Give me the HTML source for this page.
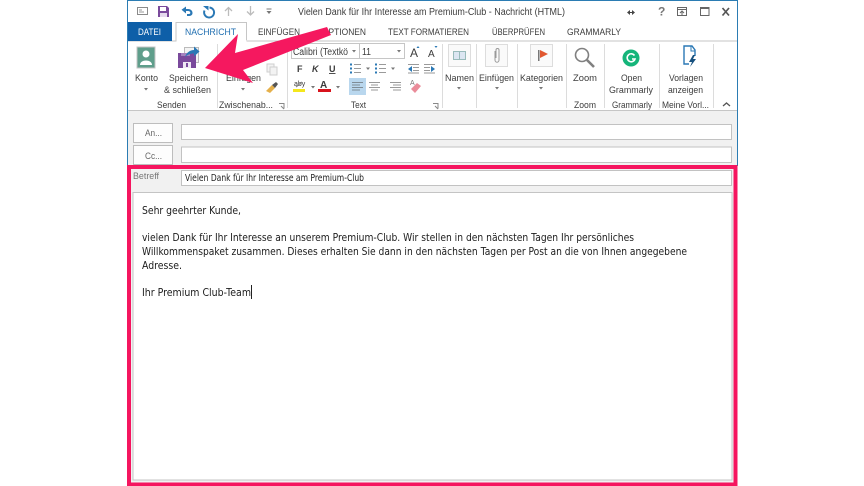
<!DOCTYPE html>
<html><head><meta charset="utf-8"><style>
html,body{margin:0;padding:0;background:#fff;width:864px;height:486px;overflow:hidden}
svg{display:block;filter:blur(.3px)}
text{font-family:"Liberation Sans",sans-serif;font-size:9.5px;fill:#3c3c3c}
text.b{font-family:"DejaVu Sans",sans-serif;font-size:10.5px;fill:#1c1c1c}
</style></head><body>
<svg width="864" height="486" viewBox="0 0 864 486" xmlns="http://www.w3.org/2000/svg">
<rect width="864" height="486" fill="#fff"/>
<!-- window -->
<rect x="127" y="0" width="611" height="486" fill="#fff"/>
<rect x="127" y="0" width="611" height="1" fill="#2b7cb3"/>
<rect x="127" y="0" width="1" height="166" fill="#2b7cb3"/>
<rect x="737" y="0" width="1" height="166" fill="#2b7cb3"/>
<rect x="128" y="111" width="609" height="55" fill="#f1f1f1"/>
<rect x="128" y="40.500" width="609" height="1" fill="#c6c6c6"/>
<rect x="128" y="110" width="609" height="1" fill="#c6c6c6"/>
<!-- QAT -->
<rect x="137.500" y="7.500" width="10" height="7" fill="#fff" stroke="#8a8a8a"/><path d="M139 10h3M139 12h5" stroke="#999" stroke-width="1"/>
<path d="M158 6h9l2 2v9h-11z" fill="#7a4a9c"/><rect x="160" y="7" width="6" height="4" fill="#fff"/><rect x="160" y="13" width="7" height="4" fill="#e5daee"/>
<path d="M186 6.500v2.500h2c3 0 4.500 2 4.500 4s-1.500 3-4 3h-1.500v-2h1.500c1 0 1.800-.3 1.800-1.300 0-1-.9-1.700-2.300-1.700h-2v2.500l-4.500-3.800z" fill="#2a78b5"/>
<path d="M209.500 7.500a5 5 0 1 1-5 3" fill="none" stroke="#2a78b5" stroke-width="1.900"/><path d="M203 6h5.500v4.500z" fill="#2a78b5"/>
<path d="M228.500 16V8M225 11l3.500-3.500 3.500 3.500" fill="none" stroke="#bcbcbc" stroke-width="1.300"/>
<path d="M250.500 6v9M247 11.500l3.500 3.500 3.500-3.500" fill="none" stroke="#bcbcbc" stroke-width="1.300"/>
<path d="M266.500 9h5" stroke="#777"/><path d="M266.500 11h5l-2.500 3z" fill="#777"/>
<text x="298" y="15" textLength="267" lengthAdjust="spacingAndGlyphs" style="font-size:10px">Vielen Dank für Ihr Interesse am Premium-Club - Nachricht (HTML)</text>
<!-- window controls -->
<path d="M628 12.500h6" stroke="#444" stroke-width="1"/><path d="M630 10v5l-3-2.500zM632 10v5l3-2.500z" fill="#444"/>
<text x="658" y="15.500" style="font-size:12px;font-weight:bold;fill:#777">?</text>
<rect x="677.500" y="7.500" width="9" height="8" fill="none" stroke="#666"/><path d="M678 9.500h8M682 15v-3.500M680 13l2-2 2 2" fill="none" stroke="#666"/>
<rect x="700.500" y="7.500" width="8.500" height="8" fill="none" stroke="#666"/><rect x="700" y="7" width="9.500" height="2" fill="#666"/>
<path d="M722.500 8l6.500 7.500M729 8l-6.500 7.500" stroke="#555" stroke-width="1.700"/>
<!-- tabs -->
<rect x="128" y="22" width="44" height="19" fill="#0e5fa8"/>
<path d="M176 41V22.500h70.500V41" fill="#fff" stroke="#c6c6c6"/><rect x="176.500" y="40" width="70" height="2" fill="#fff"/>
<text x="138" y="35" textLength="23" lengthAdjust="spacingAndGlyphs" style="fill:#fff">DATEI</text>
<text x="185" y="35" textLength="51" lengthAdjust="spacingAndGlyphs" style="fill:#1f6eb0">NACHRICHT</text>
<text x="258" y="35" textLength="42" lengthAdjust="spacingAndGlyphs">EINFÜGEN</text>
<text x="322" y="35" textLength="44" lengthAdjust="spacingAndGlyphs">OPTIONEN</text>
<text x="388" y="35" textLength="81" lengthAdjust="spacingAndGlyphs">TEXT FORMATIEREN</text>
<text x="492" y="35" textLength="53" lengthAdjust="spacingAndGlyphs">ÜBERPRÜFEN</text>
<text x="567" y="35" textLength="54" lengthAdjust="spacingAndGlyphs">GRAMMARLY</text>
<!-- separators -->
<g fill="#dcdcdc"><rect x="217" y="44" width="1" height="64"/><rect x="287" y="44" width="1" height="64"/><rect x="442" y="44" width="1" height="64"/><rect x="476" y="44" width="1" height="64"/><rect x="517" y="44" width="1" height="64"/><rect x="566" y="44" width="1" height="64"/><rect x="604" y="44" width="1" height="64"/><rect x="659" y="44" width="1" height="64"/><rect x="713" y="44" width="1" height="64"/></g>
<!-- Konto icon -->
<rect x="137" y="47" width="18" height="21" fill="#5f9e8b" stroke="#c4c4c4"/>
<circle cx="146" cy="54" r="3.500" fill="#fff"/><path d="M140 65c0-6 12-6 12 0z" fill="#fff"/>
<text x="135" y="81" textLength="23" lengthAdjust="spacingAndGlyphs">Konto</text>
<path d="M144 88h4l-2 2.500z" fill="#777"/>
<!-- Speichern icon -->
<rect x="184.500" y="47.500" width="14" height="15" fill="#f4f4f4" stroke="#bbb"/>
<path d="M178 53h16l2 2v13h-18z" fill="#7a4a9c"/><rect x="181" y="53" width="9" height="3" fill="#a583be"/><rect x="183" y="62" width="8" height="6" fill="#efe8f4"/><rect x="186" y="63" width="2" height="4" fill="#7a4a9c"/>
<path d="M185 57c1-4 5-7 9-7v-3.500l5.500 5-5.500 5v-3c-3.500 0-6.500 1-9 3.500z" fill="#2a78b5"/>
<text x="169" y="81" textLength="39" lengthAdjust="spacingAndGlyphs">Speichern</text>
<text x="164" y="93" textLength="47" lengthAdjust="spacingAndGlyphs">&amp; schließen</text>
<!-- Einfügen -->
<text x="226" y="81" textLength="35" lengthAdjust="spacingAndGlyphs">Einfügen</text>
<path d="M241 88h4l-2 2.500z" fill="#777"/>
<!-- clipboard small -->
<rect x="267" y="64" width="7" height="8" fill="#f3f3f3" stroke="#cfcfcf"/><rect x="270" y="67" width="7" height="8" fill="#f3f3f3" stroke="#cfcfcf"/>
<path d="M266 91l6-6 3 3-5 5z" fill="#e5b04a"/><path d="M272 85l4-3 2 2-3 4z" fill="#555"/>
<text x="219" y="108" textLength="54" lengthAdjust="spacingAndGlyphs">Zwischenab...</text>
<text x="157" y="108" textLength="29" lengthAdjust="spacingAndGlyphs">Senden</text>
<path d="M279 103.500h5v5M281 106l3 3" fill="none" stroke="#888"/>
<!-- font -->
<rect x="291.500" y="43.500" width="68" height="15" fill="#fff" stroke="#c6c6c6"/>
<rect x="359.500" y="43.500" width="45" height="15" fill="#fff" stroke="#c6c6c6"/>
<text x="293" y="55" textLength="55" lengthAdjust="spacingAndGlyphs" style="font-size:10px">Calibri (Textkö</text>
<path d="M352 50h4l-2 2.500zM397 50h4l-2 2.500z" fill="#777"/>
<text x="362" y="55" textLength="9" lengthAdjust="spacingAndGlyphs" style="font-size:10px">11</text>
<text x="410" y="57" style="font-size:12px">A</text><text x="428" y="57" style="font-size:10px">A</text>
<path d="M418 46l1.500 2h-3zM436 48l1.500-2h-3z" fill="#2a78b5"/>
<text x="297" y="72" style="font-weight:bold;font-size:9px">F</text><text x="312" y="72" style="font-weight:bold;font-style:italic;font-size:9px">K</text><text x="329" y="72" style="font-weight:bold;font-size:9px;text-decoration:underline">U</text>
<g stroke="#9a9a9a" fill="none"><path d="M354 64.500h7M354 68.500h7M354 72.500h7M379 64.500h7M379 68.500h7M379 72.500h7"/></g>
<path d="M350 63.500h2v2h-2zM350 67.500h2v2h-2zM350 71.500h2v2h-2zM375 63.500h2v2h-2zM375 67.500h2v2h-2zM375 71.500h2v2h-2z" fill="#2a78b5"/>
<!-- indent -->
<g stroke="#9a9a9a" fill="none"><path d="M408 64.500h11M413 67.500h6M413 70.500h6M408 73h11M424 64.500h11M424 67.500h6M424 70.500h6M424 73h11"/></g>
<path d="M408 69l4-3v6zM435 69l-4-3v6z" fill="#2a78b5"/>
<path d="M366 67.500h4l-2 2.500zM391 67.500h4l-2 2.500zM311 86h4l-2 2.500zM336 86h4l-2 2.500z" fill="#777"/>
<text x="294" y="86" style="font-size:7px">aby</text><rect x="293" y="89" width="12" height="3" fill="#f4e71d"/><path d="M296 87l6-5" stroke="#888" stroke-width="1.200"/>
<text x="320" y="88" style="font-size:10px;font-weight:bold">A</text><rect x="318" y="89" width="13" height="3" fill="#d8131c"/>
<rect x="349" y="78" width="17" height="17" fill="#b9d7ee"/>
<g stroke="#7f8c96" fill="none"><path d="M352 82.500h11M352 85h8M352 87.500h11M352 90h8"/></g>
<g stroke="#9a9a9a" fill="none"><path d="M369 82.500h11M371 85h7M369 87.500h11M371 90h7M390 82.500h11M393 85h8M390 87.500h11M393 90h8"/></g>
<path d="M411 89l6-6 4 3-6 7z" fill="#ea8c9a"/><text x="410" y="85" style="font-size:7px;fill:#777">A</text>
<text x="351" y="108" textLength="15" lengthAdjust="spacingAndGlyphs">Text</text>
<path d="M433 103.500h5v5M435 106l3 3" fill="none" stroke="#888"/>
<!-- Namen / Einfügen / Kategorien -->
<rect x="448.500" y="44.500" width="22" height="22" fill="#fafafa" stroke="#ddd"/>
<rect x="453.500" y="51.500" width="6" height="8" fill="#dce6f2" stroke="#9bb"/><rect x="459.500" y="51.500" width="6" height="8" fill="#dce6f2" stroke="#9bb"/>
<text x="445" y="81" textLength="29" lengthAdjust="spacingAndGlyphs">Namen</text><path d="M457 87h4l-2 2.500z" fill="#777"/>
<rect x="485.500" y="44.500" width="22" height="22" fill="#fafafa" stroke="#ddd"/>
<path d="M495 51v9c0 3 4 3 4 0v-10c0-2-3-2-3 0v8" fill="none" stroke="#999"/>
<text x="479" y="81" textLength="35" lengthAdjust="spacingAndGlyphs">Einfügen</text><path d="M495 87h4l-2 2.500z" fill="#777"/>
<rect x="530.500" y="44.500" width="22" height="22" fill="#fafafa" stroke="#ddd"/>
<rect x="538" y="50" width="1.500" height="11" fill="#777"/><path d="M540 50l8 4-8 4z" fill="#e1572f"/>
<text x="520" y="81" textLength="43" lengthAdjust="spacingAndGlyphs">Kategorien</text><path d="M539 87h4l-2 2.500z" fill="#777"/>
<!-- Zoom -->
<circle cx="582" cy="55" r="6.500" fill="#fff" stroke="#808080" stroke-width="1.600"/><path d="M587 60l7 7" stroke="#808080" stroke-width="2.600"/>
<text x="573" y="81" textLength="24" lengthAdjust="spacingAndGlyphs">Zoom</text>
<text x="574" y="108" textLength="22" lengthAdjust="spacingAndGlyphs">Zoom</text>
<!-- Grammarly -->
<circle cx="631" cy="58" r="8.500" fill="#15b57a"/><path d="M634.500 55.500a4 4 0 1 0 .5 3.500h-3" fill="none" stroke="#fff" stroke-width="1.600"/>
<text x="621" y="81" textLength="21" lengthAdjust="spacingAndGlyphs">Open</text>
<text x="609" y="93" textLength="44" lengthAdjust="spacingAndGlyphs">Grammarly</text>
<text x="612" y="108" textLength="40" lengthAdjust="spacingAndGlyphs">Grammarly</text>
<!-- Vorlagen -->
<path d="M684 62V46h8l3 4v6M684 62v2h5" fill="#fff" stroke="#2a78b5" stroke-width="1.400"/><path d="M691 46v5h4" fill="none" stroke="#2a78b5"/>
<path d="M693 55l-4 7h3l-2 5 6-8h-3l2-4z" fill="#16507e"/>
<text x="669" y="81" textLength="34" lengthAdjust="spacingAndGlyphs">Vorlagen</text>
<text x="668" y="93" textLength="35" lengthAdjust="spacingAndGlyphs">anzeigen</text>
<text x="662" y="108" textLength="47" lengthAdjust="spacingAndGlyphs">Meine Vorl...</text>
<path d="M723 106l3.500-3 3.500 3" fill="none" stroke="#555" stroke-width="1.300"/>
<!-- address -->
<rect x="133.500" y="123.500" width="39" height="19" fill="#fdfdfd" stroke="#bdbdbd"/>
<rect x="133.500" y="145.500" width="39" height="19" fill="#fdfdfd" stroke="#bdbdbd"/>
<text x="145" y="136" textLength="17" lengthAdjust="spacingAndGlyphs" style="fill:#666">An...</text>
<text x="145" y="159" textLength="17" lengthAdjust="spacingAndGlyphs" style="fill:#666">Cc...</text>
<rect x="181.500" y="124.500" width="550" height="15" fill="#fff" stroke="#c2c2c2"/>
<rect x="181.500" y="147" width="550" height="15.500" fill="#fff" stroke="#c2c2c2"/>
<!-- lower area -->
<rect x="129" y="167" width="606" height="317" fill="#f1f1f1"/>
<text x="133" y="179" textLength="26" lengthAdjust="spacingAndGlyphs" style="fill:#777">Betreff</text>
<rect x="181.500" y="170.500" width="550" height="15" fill="#fff" stroke="#c2c2c2"/>
<text class="b" x="185" y="181" textLength="179" lengthAdjust="spacingAndGlyphs" style="font-size:9.500px">Vielen Dank für Ihr Interesse am Premium-Club</text>
<rect x="133" y="192.500" width="599" height="287.500" fill="#fff" stroke="#c4c4c4"/>
<text class="b" x="142" y="214" textLength="99" lengthAdjust="spacingAndGlyphs">Sehr geehrter Kunde,</text>
<text class="b" x="142" y="241" textLength="492" lengthAdjust="spacingAndGlyphs">vielen Dank für Ihr Interesse an unserem Premium-Club. Wir stellen in den nächsten Tagen Ihr persönliches</text>
<text class="b" x="142" y="255" textLength="545" lengthAdjust="spacingAndGlyphs">Willkommenspaket zusammen. Dieses erhalten Sie dann in den nächsten Tagen per Post an die von Ihnen angegebene</text>
<text class="b" x="142" y="269" textLength="40" lengthAdjust="spacingAndGlyphs">Adresse.</text>
<text class="b" x="142" y="296" textLength="109" lengthAdjust="spacingAndGlyphs">Ihr Premium Club-Team</text>
<rect x="251" y="285" width="1" height="14" fill="#222"/>
<!-- red frame -->
<rect x="129" y="167" width="606.500" height="317.500" fill="none" stroke="#f5155f" stroke-width="4"/>
<!-- arrow -->
<path d="M205 68L238 34L235 53L327 27L331 35L243 70L253 83Z" fill="#f5185f"/>
</svg>
</body></html>
